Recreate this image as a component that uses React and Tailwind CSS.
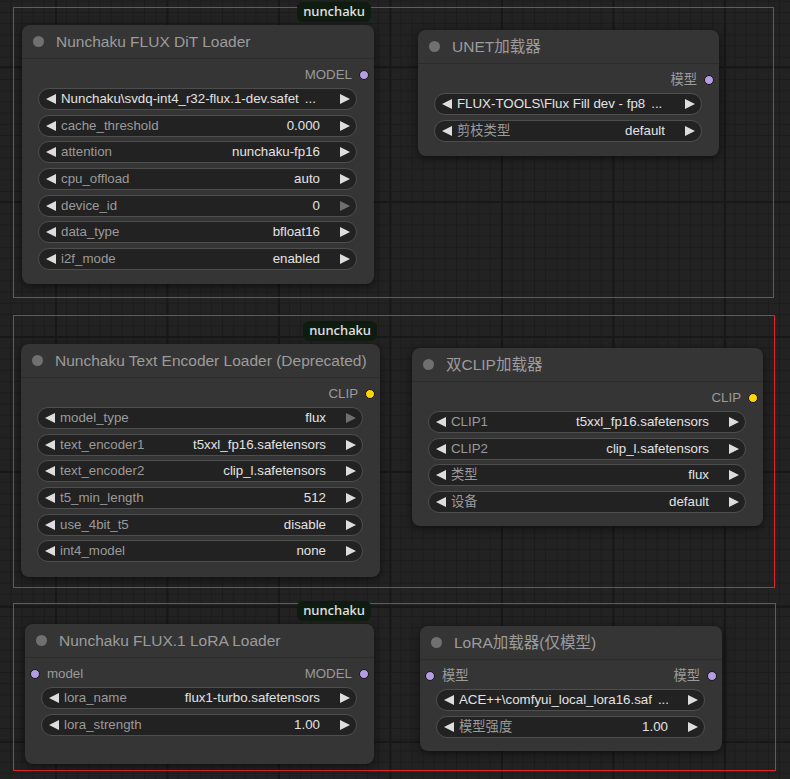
import React from 'react';

const FONT = '[font-family:"Liberation_Sans","Noto_Sans_CJK_SC",Arial,sans-serif]';

const Arrow = ({ dir = 'left', on = true }) => (
  <svg width="10" height="10" viewBox="0 0 10 10" className="shrink-0">
    {dir === 'left' ? (
      <path d="M10 0 L10 10 L0 5 Z" fill={on ? '#dddddd' : '#6f6f6f'} />
    ) : (
      <path d="M0 0 L0 10 L10 5 Z" fill={on ? '#dddddd' : '#6f6f6f'} />
    )}
  </svg>
);

const Dot = ({ color }) => (
  <span className={`block h-[10px] w-[10px] shrink-0 rounded-full border border-[#151515] ${color}`} />
);

const Widget = ({ label, value, l, r = true, full }) => (
  <div className="flex h-[22px] items-center rounded-full border border-[#4e4e4e] bg-[#222222] pl-[7px] pr-[6px]">
    <Arrow dir="left" on={l} />
    {full ? (
      <div className="ml-[5px] flex min-w-0 flex-1 items-center overflow-hidden whitespace-nowrap text-[#e2e2e2]">
        <span>{value}</span>
        <span className="ml-[6px]">...</span>
      </div>
    ) : (
      <>
        <span className="ml-[5px] whitespace-nowrap text-[#9a9a9a]">{label}</span>
        <span className="flex-1 whitespace-nowrap text-right text-[#e2e2e2]">{value}</span>
      </>
    )}
    <span className="ml-[20px]">
      <Arrow dir="right" on={r} />
    </span>
  </div>
);

const Node = ({ pos, title, badge, input, output, dot, widgets }) => (
  <div className={`absolute ${pos}`}>
    {badge && (
      <div className="absolute -top-[23px] right-[3px] flex h-[20px] items-center rounded-[6px] bg-[#0e1c0f] px-[6px] [font-family:'Noto_Sans',sans-serif] text-[13px] font-medium text-[#e2e2e2]">
        nunchaku
      </div>
    )}
    <div className="flex h-full flex-col rounded-[8px] bg-[#353535] shadow-[0_2px_10px_rgba(0,0,0,0.55)]">
      <div className="flex h-[34px] shrink-0 items-center border-b border-[#2c2c2c] pl-[11px]">
        <span className="block h-[11px] w-[11px] rounded-full bg-[#707070]" />
        <span className="ml-[12px] whitespace-nowrap text-[15.5px] text-[#9c9c9c]">{title}</span>
      </div>
      <div className="flex flex-col pt-[5px] text-[13.3px]">
        <div className="flex h-[22px] items-center pl-[5px] pr-[5px]">
          {input ? (
            <>
              <Dot color={dot} />
              <span className="ml-[7px] text-[#9a9a9a]">{input}</span>
            </>
          ) : null}
          <span className="ml-auto text-[#9a9a9a]">{output}</span>
          <span className="ml-[7px]">
            <Dot color={dot} />
          </span>
        </div>
        <div className="ml-[16px] mr-[17px] mt-[2px] flex flex-col gap-[4.67px]">
          {widgets.map((w, i) => (
            <Widget key={i} {...w} />
          ))}
        </div>
      </div>
    </div>
  </div>
);

const Group = ({ pos }) => <div className={`absolute border border-[#e0242d] ${pos}`} />;

export default function App() {
  const purple = 'bg-[#b49de0]';
  const yellow = 'bg-[#ffd500]';

  return (
    <div
      className={`relative h-[779px] w-[790px] overflow-hidden bg-[#222222] ${FONT} [background-image:linear-gradient(to_right,#181818_2px,transparent_2px),linear-gradient(to_bottom,#181818_2px,transparent_2px),linear-gradient(to_right,#1c1c1c_1px,transparent_1px),linear-gradient(to_bottom,#1c1c1c_1px,transparent_1px)] [background-size:111.5px_135px,111.5px_135px,11.15px_11.2px,11.15px_11.2px] [background-position:55px_66px,55px_66px,10.4px_0.8px,10.4px_0.8px]`}
    >
      <Group pos="left-[13px] top-[7px] w-[761px] h-[291px]" />
      <Group pos="left-[13px] top-[315px] w-[762px] h-[273px]" />
      <Group pos="left-[13px] top-[603px] w-[763px] h-[168px]" />

      <Node
        pos="left-[22px] top-[25px] w-[352px] h-[259px]"
        title="Nunchaku FLUX DiT Loader"
        badge
        output="MODEL"
        dot={purple}
        widgets={[
          { full: true, value: 'Nunchaku\\svdq-int4_r32-flux.1-dev.safet', l: true },
          { label: 'cache_threshold', value: '0.000' },
          { label: 'attention', value: 'nunchaku-fp16' },
          { label: 'cpu_offload', value: 'auto' },
          { label: 'device_id', value: '0', r: false },
          { label: 'data_type', value: 'bfloat16' },
          { label: 'i2f_mode', value: 'enabled' },
        ]}
      />

      <Node
        pos="left-[418px] top-[30px] w-[301px] h-[126px]"
        title="UNET加载器"
        output="模型"
        dot={purple}
        widgets={[
          { full: true, value: 'FLUX-TOOLS\\Flux Fill dev - fp8' },
          { label: '剪枝类型', value: 'default' },
        ]}
      />

      <Node
        pos="left-[21px] top-[344px] w-[359px] h-[233px]"
        title="Nunchaku Text Encoder Loader (Deprecated)"
        badge
        output="CLIP"
        dot={yellow}
        widgets={[
          { label: 'model_type', value: 'flux', r: false },
          { label: 'text_encoder1', value: 't5xxl_fp16.safetensors', l: true },
          { label: 'text_encoder2', value: 'clip_l.safetensors', l: true },
          { label: 't5_min_length', value: '512', l: true },
          { label: 'use_4bit_t5', value: 'disable' },
          { label: 'int4_model', value: 'none' },
        ]}
      />

      <Node
        pos="left-[412px] top-[348px] w-[351px] h-[178px]"
        title="双CLIP加载器"
        output="CLIP"
        dot={yellow}
        widgets={[
          { label: 'CLIP1', value: 't5xxl_fp16.safetensors', l: true },
          { label: 'CLIP2', value: 'clip_l.safetensors', l: true },
          { label: '类型', value: 'flux', l: true },
          { label: '设备', value: 'default' },
        ]}
      />

      <Node
        pos="left-[25px] top-[624px] w-[349px] h-[140px]"
        title="Nunchaku FLUX.1 LoRA Loader"
        badge
        input="model"
        output="MODEL"
        dot={purple}
        widgets={[
          { label: 'lora_name', value: 'flux1-turbo.safetensors', l: true },
          { label: 'lora_strength', value: '1.00', l: true },
        ]}
      />

      <Node
        pos="left-[420px] top-[626px] w-[302px] h-[125px]"
        title="LoRA加载器(仅模型)"
        input="模型"
        output="模型"
        dot={purple}
        widgets={[
          { full: true, value: 'ACE++\\comfyui_local_lora16.saf' },
          { label: '模型强度', value: '1.00', l: true },
        ]}
      />
    </div>
  );
}
